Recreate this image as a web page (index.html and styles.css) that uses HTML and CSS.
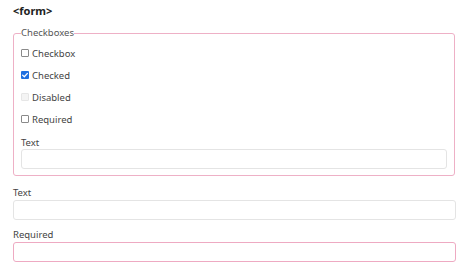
FILE: index.html
```html
<!DOCTYPE html>
<html lang="en">
<head>
<meta charset="utf-8">
<title>form</title>
<link rel="stylesheet" href="styles.css">
</head>
<body>
<div class="page">
  <h4 class="title">&lt;form&gt;</h4>
  <form class="form">
    <fieldset class="group">
      <legend class="legend">Checkboxes</legend>
      <div class="rows">
        <label class="check-row"><span class="box"></span><span>Checkbox</span></label>
        <label class="check-row"><span class="box checked"><svg viewBox="0 0 8 8" width="8" height="8"><path d="M1.6 4.1 L3.3 5.7 L6.4 2.4" fill="none" stroke="#fff" stroke-width="1.3" stroke-linecap="round" stroke-linejoin="round"/></svg></span><span>Checked</span></label>
        <label class="check-row disabled"><span class="box"></span><span>Disabled</span></label>
        <label class="check-row"><span class="box"></span><span>Required</span></label>
      </div>
      <label class="field-label inner">Text</label>
      <div class="input"></div>
    </fieldset>
    <label class="field-label">Text</label>
    <div class="input"></div>
    <label class="field-label">Required</label>
    <div class="input required"></div>
  </form>
</div>
</body>
</html>
```
FILE: styles.css
```css
html, body {
  margin: 0;
  padding: 0;
  background: #fff;
}
body {
  font-family: "Noto Sans", "Open Sans", sans-serif;
  font-size: 9.5px;
  color: #444;
}
.page {
  padding: 4px 18px 0 13px;
}
.title {
  margin: 0;
  font-size: 11px;
  line-height: 14px;
  font-weight: 700;
  color: #222;
}
.form {
  margin: 0;
}
.group {
  margin: 9px 1px 11px 0;
  border: 1px solid #eeb0c6;
  border-radius: 3px;
  padding: 0 7px 6px;
}
.legend {
  padding: 0;
  line-height: 12px;
  color: #555;
}
.rows {
  display: flex;
  flex-direction: column;
  margin-top: 3px;
}
.check-row {
  display: flex;
  align-items: center;
  height: 22px;
  gap: 3px;
}
.box {
  width: 6px;
  height: 6px;
  border: 1px solid #8a8a8a;
  border-radius: 1px;
  background: #fff;
  display: flex;
}
.box.checked {
  width: 8px;
  height: 8px;
  border: none;
  background: #1f6fe0;
}
.disabled .box {
  border-color: #e6e6e6;
  background: #f4f4f4;
}
.field-label {
  display: block;
  line-height: 12px;
  margin-bottom: 1px;
}
.field-label.inner {
  margin-top: 7px;
  margin-bottom: 0;
}
.input {
  height: 18px;
  border: 1px solid #e4e4e4;
  border-radius: 3px;
  background: #fff;
  margin-bottom: 9px;
}
.group .input {
  margin-bottom: 0;
}
.input.required {
  border-color: #eeaac2;
}
```
